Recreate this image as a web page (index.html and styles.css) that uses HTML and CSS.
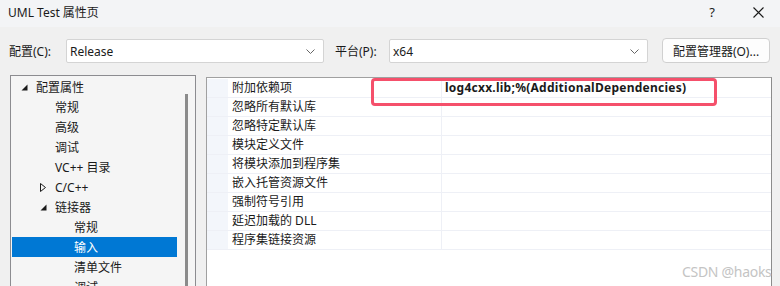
FILE: index.html
```html
<!DOCTYPE html>
<html lang="zh">
<head>
<meta charset="utf-8">
<link rel="stylesheet" href="styles.css">
</head>
<body>
<div class="titlebar">
  <span class="title">UML Test 属性页</span>
  <span class="help">?</span>
  <svg class="close" width="11" height="11" viewBox="0 0 11 11"><path d="M0.5 0.5 L10.5 10.5 M10.5 0.5 L0.5 10.5" stroke="#1a1a1a" stroke-width="1.1" fill="none"/></svg>
</div>
<div class="toolbar">
  <span class="lbl lbl1">配置(C):</span>
  <div class="combo combo1"><span>Release</span><svg width="9" height="5" viewBox="0 0 9 5"><path d="M0.5 0.5 L4.5 4.5 L8.5 0.5" stroke="#666" stroke-width="1" fill="none"/></svg></div>
  <span class="lbl lbl2">平台(P):</span>
  <div class="combo combo2"><span>x64</span><svg width="9" height="5" viewBox="0 0 9 5"><path d="M0.5 0.5 L4.5 4.5 L8.5 0.5" stroke="#666" stroke-width="1" fill="none"/></svg></div>
  <button class="btn">配置管理器(O)...</button>
</div>
<div class="main">
  <div class="tree">
    <ul class="items">
      <li class="row l0"><span class="exp"><svg width="7" height="7" viewBox="0 0 7 7"><polygon points="6.5,0.5 6.5,6.5 0.5,6.5" fill="#1a1a1a"/></svg></span>配置属性</li>
      <li class="row l1"><span class="exp"></span>常规</li>
      <li class="row l1"><span class="exp"></span>高级</li>
      <li class="row l1"><span class="exp"></span>调试</li>
      <li class="row l1"><span class="exp"></span>VC++ 目录</li>
      <li class="row l1"><span class="exp"><svg width="7" height="9" viewBox="0 0 7 9"><polygon points="0.5,0.5 5.5,4.5 0.5,8.5" fill="none" stroke="#1a1a1a" stroke-width="1"/></svg></span>C/C++</li>
      <li class="row l1"><span class="exp"><svg width="7" height="7" viewBox="0 0 7 7"><polygon points="6.5,0.5 6.5,6.5 0.5,6.5" fill="#1a1a1a"/></svg></span>链接器</li>
      <li class="row l2"><span class="exp"></span>常规</li>
      <li class="row l2 sel"><span class="exp"></span>输入</li>
      <li class="row l2"><span class="exp"></span>清单文件</li>
      <li class="row l2"><span class="exp"></span>调试</li>
    </ul>
    <div class="scroll"><div class="thumb"></div></div>
  </div>
  <div class="grid">
    <div class="grow"><span class="ind"></span><span class="name">附加依赖项</span><span class="val">log4cxx.lib;%(AdditionalDependencies)</span></div>
    <div class="grow"><span class="ind"></span><span class="name">忽略所有默认库</span><span class="val"></span></div>
    <div class="grow"><span class="ind"></span><span class="name">忽略特定默认库</span><span class="val"></span></div>
    <div class="grow"><span class="ind"></span><span class="name">模块定义文件</span><span class="val"></span></div>
    <div class="grow"><span class="ind"></span><span class="name">将模块添加到程序集</span><span class="val"></span></div>
    <div class="grow"><span class="ind"></span><span class="name">嵌入托管资源文件</span><span class="val"></span></div>
    <div class="grow"><span class="ind"></span><span class="name">强制符号引用</span><span class="val"></span></div>
    <div class="grow"><span class="ind"></span><span class="name">延迟加载的 DLL</span><span class="val"></span></div>
    <div class="grow"><span class="ind"></span><span class="name">程序集链接资源</span><span class="val"></span></div>
  </div>
</div>
<div class="highlight"></div>
<div class="watermark">CSDN @haoks</div>
</body>
</html>
```
FILE: styles.css
```css
html, body {
  margin: 0;
  padding: 0;
}
body {
  width: 780px;
  height: 286px;
  overflow: hidden;
  background: #f0f0f0;
  font-family: "Noto Sans", "Noto Sans CJK SC", sans-serif;
  font-size: 12px;
  color: #1a1a1a;
  position: relative;
}
.titlebar {
  height: 27px;
  background: #f3f4f6;
  display: flex;
  align-items: center;
  padding-left: 8px;
  box-sizing: border-box;
}
.title {
  font-size: 12px;
  margin-top: -3px;
}
.help {
  margin-left: auto;
  font-size: 13px;
  margin-top: -3px;
}
.close {
  margin-left: 38px;
  margin-right: 16px;
  margin-top: -3px;
}
.toolbar {
  display: flex;
  align-items: center;
  margin-top: 11px;
  height: 25px;
  padding-left: 9px;
}
.lbl {
  display: block;
}
.lbl1 { width: 57px; }
.lbl2 { width: 54px; margin-left: 11px; }
.combo {
  height: 24px;
  box-sizing: border-box;
  background: #fff;
  border: 1px solid #d4d4d4;
  border-radius: 2px;
  display: flex;
  align-items: center;
  padding-left: 3px;
  padding-right: 8px;
  margin-top: 1px;
}
.combo span { flex: 1; }
.combo1 { width: 258px; }
.combo2 { width: 259px; }
.btn {
  margin-left: 14px;
  width: 108px;
  height: 25px;
  box-sizing: border-box;
  background: #fdfdfd;
  border: 1px solid #d0d0d0;
  border-radius: 4px;
  font-family: "Noto Sans", "Noto Sans CJK SC", sans-serif;
  font-size: 12px;
  color: #1a1a1a;
  padding: 0;
}
.main {
  display: flex;
  align-items: flex-start;
  margin-top: 12px;
  padding-left: 10px;
}
.tree {
  width: 186px;
  height: 240px;
  box-sizing: border-box;
  border: 1px solid #8c8c90;
  background: #f5f5f5;
  display: flex;
}
.items {
  list-style: none;
  margin: 0;
  padding: 1px 0 0 0;
  width: 166px;
}
.row {
  height: 20px;
  display: flex;
  align-items: center;
  white-space: nowrap;
  margin-left: 1px;
}
.exp {
  width: 15px;
  display: flex;
  align-items: center;
}
.l0 { padding-left: 9px; }
.l1 { padding-left: 28px; }
.l2 { padding-left: 47px; }
.sel {
  background: #0078d4;
  color: #fff;
}
.scroll {
  flex: 1;
  display: flex;
  justify-content: center;
  padding-top: 18px;
  padding-left: 1px;
}
.thumb {
  width: 3px;
  height: 200px;
  background: #8b8b8b;
}
.grid {
  margin-left: 10px;
  margin-top: 2px;
  width: 566px;
  height: 230px;
  box-sizing: border-box;
  border: 1px solid #a0a0a0;
  border-right-color: #8c8c8c;
  background: #fff;
  padding-top: 1px;
}
.grow {
  display: flex;
  height: 19px;
  box-sizing: border-box;
  border-bottom: 1px solid #eef0f6;
}
.ind {
  width: 21px;
  background: #f3f6fb;
  flex: none;
}
.name {
  width: 214px;
  padding-left: 4px;
  box-sizing: border-box;
  border-right: 1px solid #eef0f6;
  line-height: 18px;
  flex: none;
}
.val {
  flex: 1;
  padding-left: 3px;
  line-height: 18px;
  font-weight: bold;
  letter-spacing: 0.25px;
}
.highlight {
  position: absolute;
  left: 371px;
  top: 78px;
  width: 346px;
  height: 28px;
  box-sizing: border-box;
  border: 3.5px solid #f5506b;
  border-radius: 4px;
}
.watermark {
  position: absolute;
  left: 682px;
  top: 262px;
  font-size: 14px;
  color: #c4c4c4;
  letter-spacing: -0.3px;
}
```
